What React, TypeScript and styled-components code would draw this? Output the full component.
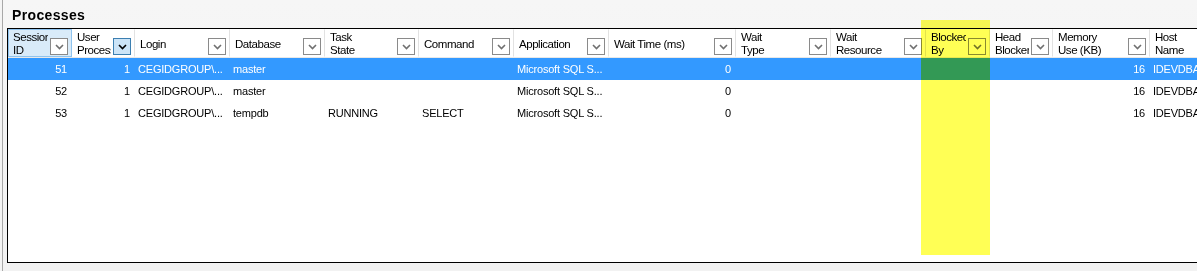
import React from 'react';
import styled, { createGlobalStyle } from 'styled-components';

const Global = createGlobalStyle`
  html, body { margin: 0; padding: 0; background: #f4f4f4; }
  body { font-family: "Liberation Sans", Arial, sans-serif; }
`;

type Col = { key: string; title: string; width: number; align?: 'left' | 'right' };

const columns: Col[] = [
  { key: 'sid', title: 'Session\nID', width: 64, align: 'right' },
  { key: 'up', title: 'User\nProcess', width: 63, align: 'right' },
  { key: 'login', title: 'Login', width: 95 },
  { key: 'db', title: 'Database', width: 95 },
  { key: 'ts', title: 'Task\nState', width: 94 },
  { key: 'cmd', title: 'Command', width: 95 },
  { key: 'app', title: 'Application', width: 95 },
  { key: 'wt', title: 'Wait Time (ms)', width: 127, align: 'right' },
  { key: 'wty', title: 'Wait\nType', width: 95 },
  { key: 'wr', title: 'Wait\nResource', width: 95 },
  { key: 'bb', title: 'Blocked\nBy', width: 64 },
  { key: 'hb', title: 'Head\nBlocker', width: 63 },
  { key: 'mem', title: 'Memory\nUse (KB)', width: 97, align: 'right' },
  { key: 'host', title: 'Host\nName', width: 95 },
];

const rows: Record<string, string>[] = [
  { sid: '51', up: '1', login: 'CEGIDGROUP\\...', db: 'master', ts: '', cmd: '', app: 'Microsoft SQL S...', wt: '0', mem: '16', host: 'IDEVDBA' },
  { sid: '52', up: '1', login: 'CEGIDGROUP\\...', db: 'master', ts: '', cmd: '', app: 'Microsoft SQL S...', wt: '0', mem: '16', host: 'IDEVDBA' },
  { sid: '53', up: '1', login: 'CEGIDGROUP\\...', db: 'tempdb', ts: 'RUNNING', cmd: 'SELECT', app: 'Microsoft SQL S...', wt: '0', mem: '16', host: 'IDEVDBA' },
];

const Page = styled.div`
  position: relative;
  box-sizing: border-box;
  width: 1195px;
  height: 271px;
  margin-left: 2px;
  border-left: 1px solid #a8a8a8;
  padding-left: 4px;
  background: linear-gradient(#f6f6f6, #f2f2f2);
  overflow: hidden;
  display: flex;
  flex-direction: column;
`;

const Title = styled.div`
  box-sizing: border-box;
  height: 28px;
  padding: 7px 0 0 5px;
  font-size: 14px;
  line-height: 16px;
  font-weight: bold;
  letter-spacing: 0.35px;
  color: #000;
`;

const Grid = styled.div`
  box-sizing: border-box;
  width: 1300px;
  height: 235px;
  border: 1px solid #000;
  border-right: none;
  background: #fff;
  overflow: hidden;
`;

const HeaderRow = styled.div`
  display: flex;
  height: 29px;
  border-bottom: 1px solid #e8e8e8;
  box-sizing: border-box;
`;

const HeaderCell = styled.div<{ $w: number; $active?: boolean }>`
  box-sizing: border-box;
  flex: none;
  width: ${p => p.$w}px;
  height: 28px;
  display: flex;
  align-items: center;
  gap: 2px;
  padding: 2px 3px 0 4px;
  background: ${p => (p.$active ? '#d9ebf9' : '#fff')};
  border: 1px solid ${p => (p.$active ? '#8fc3ee' : 'transparent')};
  border-right: 1px solid ${p => (p.$active ? '#8fc3ee' : '#e2e2e2')};
`;

const HeaderText = styled.span`
  flex: 1;
  min-width: 0;
  overflow: hidden;
  white-space: pre;
  font-size: 11.5px;
  line-height: 13px;
  letter-spacing: -0.45px;
  color: #000;
`;

const DropButton = styled.div<{ $active?: boolean }>`
  flex: none;
  align-self: flex-end;
  margin-bottom: 1px;
  box-sizing: border-box;
  width: 18px;
  height: 17px;
  display: flex;
  align-items: center;
  justify-content: center;
  padding-top: 1px;
  background: ${p => (p.$active ? '#cce4f7' : '#fff')};
  border: 1px solid ${p => (p.$active ? '#3c7fb1' : '#8a8a8a')};
  color: ${p => (p.$active ? '#000' : '#707070')};
`;

const Row = styled.div<{ $selected?: boolean }>`
  display: flex;
  height: 22px;
  background: ${p => (p.$selected ? '#3399ff' : '#fff')};
  color: ${p => (p.$selected ? '#fff' : '#000')};
`;

const Cell = styled.div<{ $w: number; $align?: string }>`
  box-sizing: border-box;
  flex: none;
  width: ${p => p.$w}px;
  padding: 0 5px 0 3px;
  text-align: ${p => p.$align || 'left'};
  font-size: 11px;
  letter-spacing: -0.2px;
  line-height: 22px;
  white-space: nowrap;
  overflow: hidden;
`;

const Highlight = styled.div`
  position: absolute;
  left: 918px;
  top: 20px;
  width: 69px;
  height: 235px;
  background: #ffff55;
  mix-blend-mode: multiply;
  pointer-events: none;
`;

const Chevron = () => (
  <svg width="9" height="6" viewBox="0 0 9 6">
    <polyline points="1,1 4.5,4.5 8,1" fill="none" stroke="currentColor" strokeWidth="1.6" />
  </svg>
);

export default function App() {
  return (
    <>
      <Global />
      <Page>
        <Title>Processes</Title>
        <Grid>
          <HeaderRow>
            {columns.map(c => (
              <HeaderCell key={c.key} $w={c.width} $active={c.key === 'sid'}>
                <HeaderText>{c.title}</HeaderText>
                <DropButton $active={c.key === 'up'}>
                  <Chevron />
                </DropButton>
              </HeaderCell>
            ))}
          </HeaderRow>
          {rows.map((r, i) => (
            <Row key={i} $selected={i === 0}>
              {columns.map(c => (
                <Cell key={c.key} $w={c.width} $align={c.align}>
                  {r[c.key] || ''}
                </Cell>
              ))}
            </Row>
          ))}
        </Grid>
        <Highlight />
      </Page>
    </>
  );
}
